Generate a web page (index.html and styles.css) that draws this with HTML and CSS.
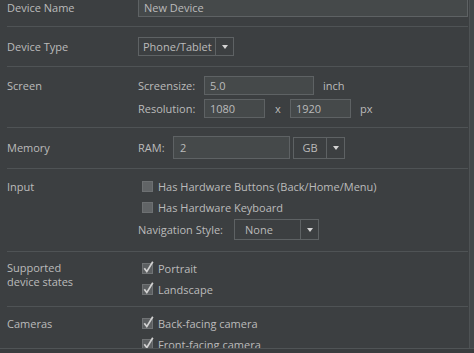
FILE: index.html
```html
<!DOCTYPE html>
<html lang="en">
<head>
    <meta charset="UTF-8">
    <title>Virtual Device Configuration</title>
    <link rel="stylesheet" href="styles.css">
</head>
<body>
    <div class="window">
        <div class="content">
            <div class="section s-name">
                <div class="label">Device Name</div>
                <div class="controls">
                    <div class="row row-name">
                        <div class="field field-name">New Device</div>
                    </div>
                </div>
            </div>

            <div class="section s-type">
                <div class="label lh19">Device Type</div>
                <div class="controls">
                    <div class="row row-type">
                        <div class="combo combo-type">
                            <span class="combo-text">Phone/Tablet</span>
                            <span class="combo-arrow"></span>
                        </div>
                    </div>
                </div>
            </div>

            <div class="section s-screen">
                <div class="label">Screen</div>
                <div class="controls">
                    <div class="row">
                        <span class="sub-label w66">Screensize:</span>
                        <div class="field field-size">5.0</div>
                        <span class="unit">inch</span>
                    </div>
                    <div class="row">
                        <span class="sub-label w66">Resolution:</span>
                        <div class="field field-res">1080</div>
                        <span class="times">x</span>
                        <div class="field field-res">1920</div>
                        <span class="unit">px</span>
                    </div>
                </div>
            </div>

            <div class="section s-memory">
                <div class="label">Memory</div>
                <div class="controls">
                    <div class="row">
                        <span class="sub-label w35">RAM:</span>
                        <div class="field field-ram">2</div>
                        <div class="combo combo-unit">
                            <span class="combo-text centered">GB</span>
                            <span class="combo-arrow"></span>
                        </div>
                    </div>
                </div>
            </div>

            <div class="section s-input">
                <div class="label lh21">Input</div>
                <div class="controls">
                    <div class="row row-check">
                        <span class="box"></span>
                        <span>Has Hardware Buttons (Back/Home/Menu)</span>
                    </div>
                    <div class="row row-check">
                        <span class="box"></span>
                        <span>Has Hardware Keyboard</span>
                    </div>
                    <div class="row">
                        <span class="sub-label w96">Navigation Style:</span>
                        <div class="combo combo-nav">
                            <span class="combo-text">None</span>
                            <span class="combo-arrow"></span>
                        </div>
                    </div>
                </div>
            </div>

            <div class="section s-states">
                <div class="label multi">Supported<br>device states</div>
                <div class="controls">
                    <div class="row row-check">
                        <svg class="check" width="14" height="14" viewBox="0 0 14 14"><rect x="1.5" y="2.5" width="10" height="10" fill="#5c5f61" stroke="#707375"/><path d="M3.3 7.2 L5.8 10.6 L11.8 0.8" fill="none" stroke="#d2d2d2" stroke-width="1.7"/></svg>
                        <span>Portrait</span>
                    </div>
                    <div class="row row-check">
                        <svg class="check" width="14" height="14" viewBox="0 0 14 14"><rect x="1.5" y="2.5" width="10" height="10" fill="#5c5f61" stroke="#707375"/><path d="M3.3 7.2 L5.8 10.6 L11.8 0.8" fill="none" stroke="#d2d2d2" stroke-width="1.7"/></svg>
                        <span>Landscape</span>
                    </div>
                </div>
            </div>

            <div class="section s-cameras">
                <div class="label lh21">Cameras</div>
                <div class="controls">
                    <div class="row row-check">
                        <svg class="check" width="14" height="14" viewBox="0 0 14 14"><rect x="1.5" y="2.5" width="10" height="10" fill="#5c5f61" stroke="#707375"/><path d="M3.3 7.2 L5.8 10.6 L11.8 0.8" fill="none" stroke="#d2d2d2" stroke-width="1.7"/></svg>
                        <span>Back-facing camera</span>
                    </div>
                    <div class="row row-check">
                        <svg class="check" width="14" height="14" viewBox="0 0 14 14"><rect x="1.5" y="2.5" width="10" height="10" fill="#5c5f61" stroke="#707375"/><path d="M3.3 7.2 L5.8 10.6 L11.8 0.8" fill="none" stroke="#d2d2d2" stroke-width="1.7"/></svg>
                        <span>Front-facing camera</span>
                    </div>
                </div>
            </div>
        </div>
        <div class="scrollbar"></div>
    </div>
    <div class="footer"></div>
</body>
</html>
```

FILE: styles.css
```css
html, body {
    margin: 0;
    padding: 0;
    background-color: #3c3f41;
    color: #bbbbbb;
    font-family: "Open Sans", "DejaVu Sans", sans-serif;
    font-size: 11px;
    overflow: hidden;
}
.window {
    display: flex;
    height: 348px;
}
.content {
    flex: 1;
    padding-left: 7px;
    padding-right: 1px;
    overflow: hidden;
}
.scrollbar {
    width: 4px;
    background-color: #43474a;
    border-left: 1px solid #4e5254;
}
.footer {
    height: 4px;
    background-color: #393c3e;
    border-top: 1px solid #505456;
}
.section {
    display: flex;
    border-bottom: 1px solid #4f5355;
}
.label {
    width: 131px;
    flex-shrink: 0;
    line-height: 23px;
}
.label.lh19 {
    line-height: 19px;
}
.label.lh21 {
    line-height: 21px;
}
.label.multi {
    line-height: 14px;
    padding-top: 3px;
}
.controls {
    flex: 1;
    display: flex;
    flex-direction: column;
}
.row {
    display: flex;
    align-items: center;
    height: 23px;
}
.row-name, .row-type {
    height: 19px;
}
.row-check {
    height: 21px;
}

/* section spacing */
.s-name {
    margin-top: -2px;
    padding-bottom: 9px;
}
.s-name .label {
    line-height: 19px;
}
.s-type {
    padding: 10px 0;
}
.s-screen {
    padding: 7px 0;
}
.s-memory {
    padding: 8px 0 9px;
}
.s-input {
    padding: 7px 0 10px;
}
.s-states {
    padding: 6px 0;
}
.s-cameras {
    padding: 6px 0;
    border-bottom: none;
}

/* text fields */
.field {
    box-sizing: border-box;
    background-color: #45494a;
    border: 1px solid #5e6264;
    padding-left: 5px;
    display: flex;
    align-items: center;
    height: 19px;
}
.field-name {
    flex: 1;
}
.field-size {
    width: 110px;
}
.field-res {
    width: 61px;
}
.field-ram {
    width: 117px;
    height: 23px;
    padding-left: 6px;
}
.sub-label {
    flex-shrink: 0;
}
.w66 { width: 66px; }
.w35 { width: 35px; }
.w96 { width: 96px; }
.unit {
    margin-left: 9px;
}
.times {
    width: 25px;
    padding-left: 10px;
    box-sizing: border-box;
}

/* combo boxes */
.combo {
    box-sizing: border-box;
    display: flex;
    border: 1px solid #5e6264;
    height: 19px;
}
.combo-text {
    flex: 1;
    display: flex;
    align-items: center;
    padding-left: 4px;
}
.combo-text.centered {
    justify-content: center;
    padding-left: 0;
}
.combo-arrow {
    width: 17px;
    border-left: 1px solid #5e6264;
    position: relative;
}
.combo-arrow::after {
    content: "";
    position: absolute;
    left: 50%;
    top: 50%;
    margin-left: -3px;
    margin-top: -2px;
    border-left: 3px solid transparent;
    border-right: 3px solid transparent;
    border-top: 4px solid #d4d4d4;
}
.combo-type {
    width: 96px;
}
.combo-unit {
    width: 52px;
    height: 22px;
    margin-left: 3px;
}
.combo-nav {
    width: 85px;
    height: 21px;
}
.combo-nav .combo-text {
    padding-left: 10px;
}

/* checkboxes */
.box {
    box-sizing: border-box;
    width: 11px;
    height: 11px;
    margin-left: 4px;
    margin-right: 5px;
    background-color: #616466;
    border: 1px solid #6d7072;
}
.check {
    margin-left: 3px;
    margin-right: 3px;
    margin-top: -2px;
}
```
